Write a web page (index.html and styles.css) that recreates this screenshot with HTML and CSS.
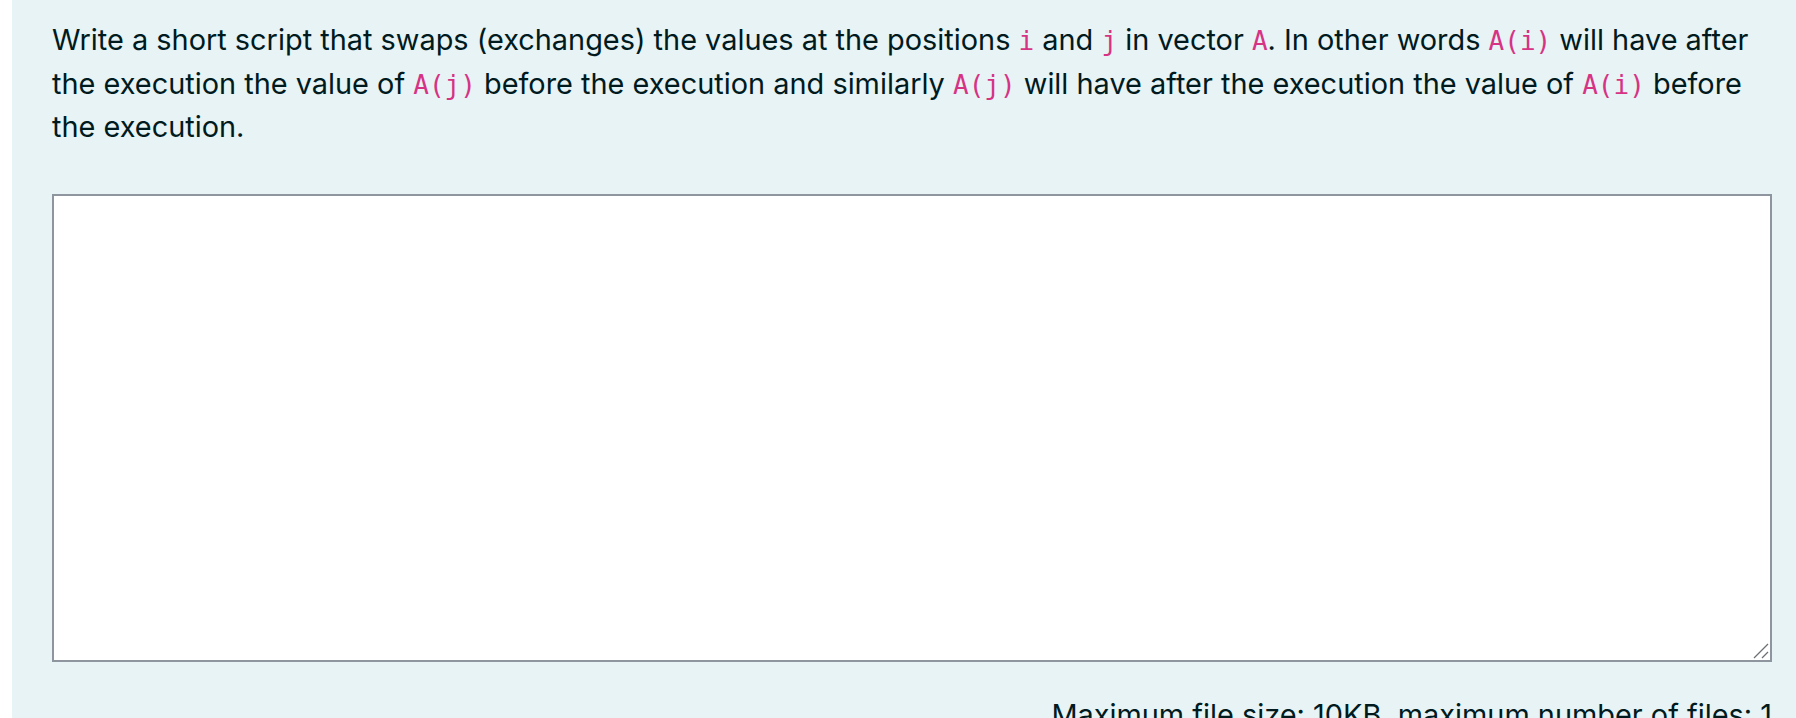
FILE: index.html
```html
<!DOCTYPE html>
<html lang="en">
<head>
<meta charset="utf-8">
<title>Essay question</title>
<link rel="stylesheet" href="styles.css">
</head>
<body>
<div class="formulation">
  <div class="qtext">
    <p>Write a short script that swaps (exchanges) the values at the positions <code>i</code> and <code>j</code> in vector <code>A</code>. In other words <code>A(i)</code> will have after the execution the value of <code>A(j)</code> before the execution and similarly <code>A(j)</code> will have after the execution the value of <code>A(i)</code> before the execution.</p>
  </div>
  <div class="answer">
    <textarea class="response" aria-label="Answer text"></textarea>
    <svg class="grip" width="18" height="18" viewBox="0 0 18 18" aria-hidden="true">
      <line x1="2" y1="16" x2="16" y2="2" stroke="#6b6f73" stroke-width="1.3"/>
      <line x1="10" y1="16" x2="16" y2="10" stroke="#6b6f73" stroke-width="1.3"/>
    </svg>
  </div>
  <div class="limits">Maximum file size: 10KB, maximum number of files: 1</div>
</div>
</body>
</html>
```
FILE: styles.css
```css
html, body {
  margin: 0;
  padding: 0;
  background: #ffffff;
  overflow: hidden;
}
body {
  font-family: Inter, "Noto Sans", "Liberation Sans", sans-serif;
  color: #001a1e;
}
.formulation {
  margin-left: 12px;
  background: #e7f3f5;
  padding: 18px 24px 40px 40px;
  min-height: 760px;
  box-sizing: border-box;
}
.qtext p {
  margin: 0;
  font-size: 28.9px;
  line-height: 43.6px;
}
.qtext code {
  font-family: "DejaVu Sans Mono", "Liberation Mono", monospace;
  font-size: 0.9em;
  line-height: 1;
  color: #d63384;
}
.answer {
  position: relative;
  margin-top: 45px;
}
.response {
  display: block;
  box-sizing: border-box;
  width: 100%;
  height: 468px;
  border: 2px solid #8f959e;
  border-radius: 0;
  background: #ffffff;
  resize: none;
  margin: 0;
  padding: 8px;
}
.grip {
  position: absolute;
  right: 2px;
  bottom: 2px;
}
.limits {
  margin-top: 31px;
  text-align: right;
  font-size: 28.9px;
  line-height: 43.6px;
}
```
